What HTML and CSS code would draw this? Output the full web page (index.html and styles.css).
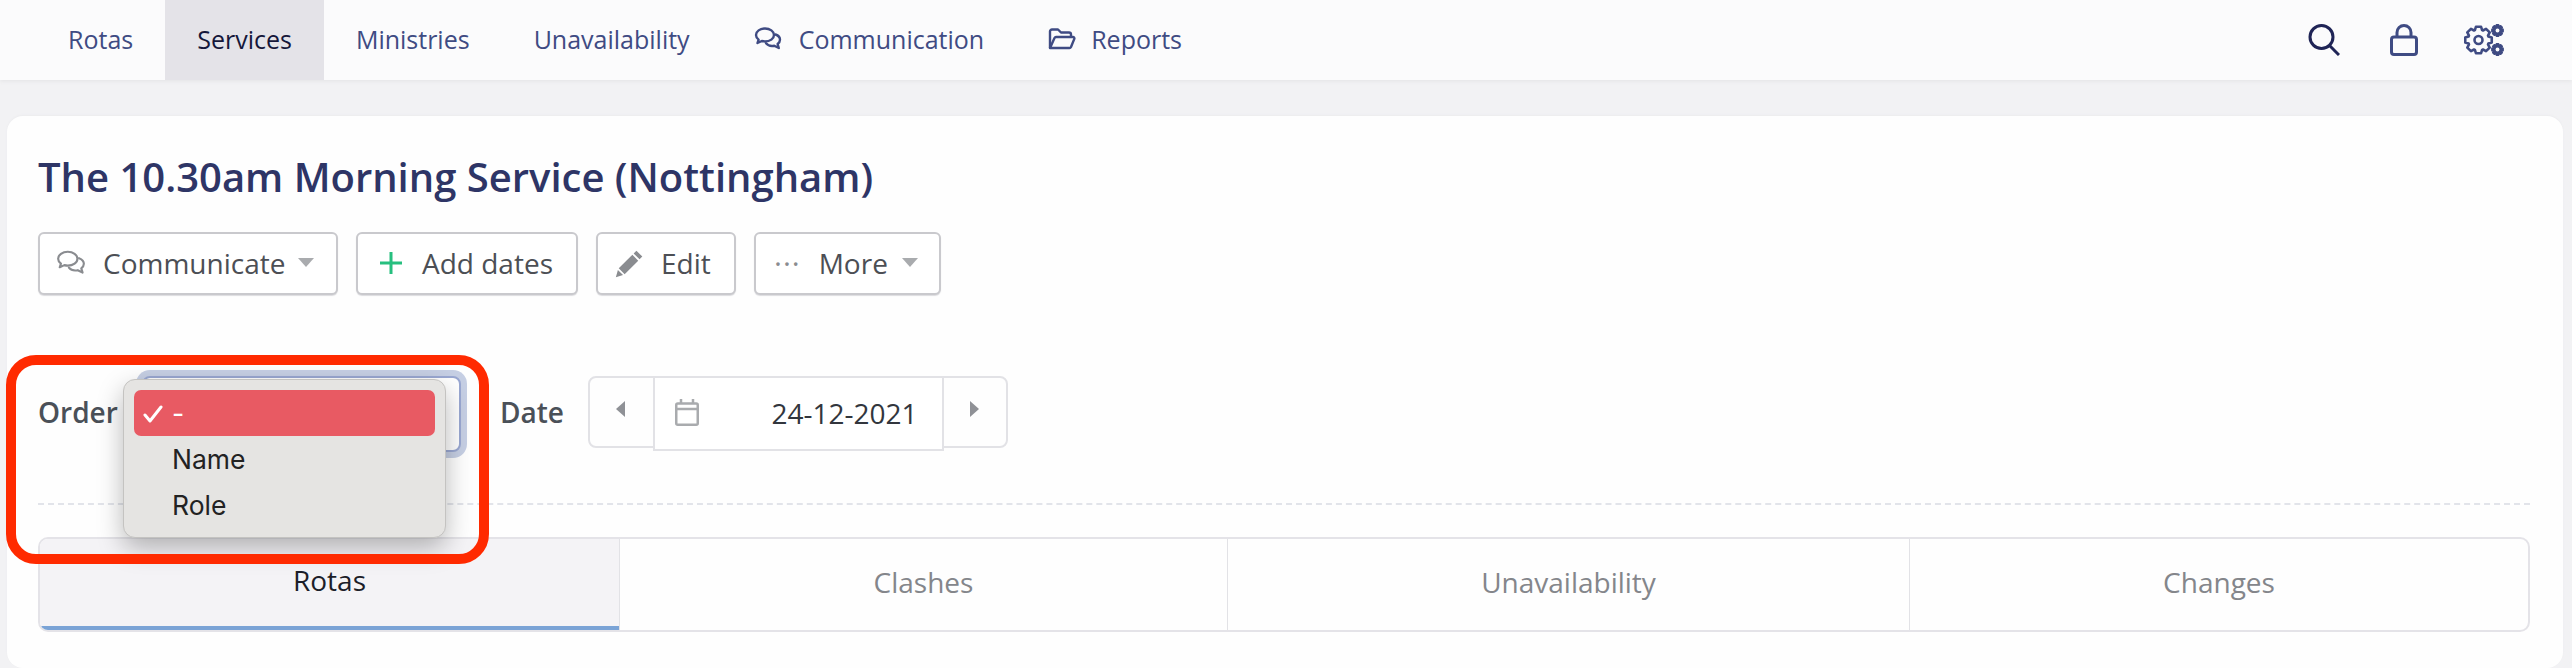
FILE: index.html
```html
<!DOCTYPE html>
<html lang="en">
  <head>
    <meta charset="UTF-8" />
    <title>The 10.30am Morning Service (Nottingham)</title>
    <link rel="stylesheet" href="styles.css">
  </head>
  <body>
    <nav class="topbar">
      <div class="nav-links">
        <a class="nav-link">Rotas</a>
        <a class="nav-link active">Services</a>
        <a class="nav-link">Ministries</a>
        <a class="nav-link">Unavailability</a>
        <a class="nav-link">
          <svg class="nav-icon" viewBox="0 0 28 28" fill="none" stroke="#3f4b83" stroke-width="2.4" stroke-linejoin="round" stroke-linecap="round">
            <path d="M11 3.5c-5 0-9 2.900-9 6.500 0 1.800 1 3.400 2.600 4.600L3.500 18l4.300-2c1 .3 2.100.5 3.200.5 5 0 9-2.900 9-6.500s-4-6.500-9-6.500z" />
            <path d="M21.500 9.500c2.800 1 4.500 3 4.500 5.300 0 1.600-.9 3.100-2.400 4.200l1.200 4-4.500-2.300c-2.900.6-6.500-.2-8.300-2.400" />
          </svg>
          Communication
        </a>
        <a class="nav-link nav-reports">
          <svg class="nav-icon" viewBox="0 0 28 28" fill="none" stroke="#3f4b83" stroke-width="2.4" stroke-linejoin="round">
            <path d="M2 23V6.500C2 5.400 2.900 4.500 4 4.500h6l3 3h8c1.100 0 2 .9 2 2V12" />
            <path d="M2 23l4.500-10c.3-.6.800-1 1.500-1h17c1 0 1.700 1 1.300 1.900L23 22c-.3.600-.8 1-1.500 1z" />
          </svg>
          Reports
        </a>
      </div>
      <div class="nav-tools">
        <svg class="tool-search" viewBox="0 0 32 32" fill="none" stroke="#1f2456" stroke-width="3">
          <circle cx="13.500" cy="13" r="11.500" />
          <path d="M21.500 21.500L31 31" />
        </svg>
        <svg class="tool-lock" viewBox="0 0 28 32" fill="none" stroke="#3f4b83" stroke-width="3" stroke-linejoin="round">
          <rect x="1.500" y="13" width="25" height="17.500" rx="2.500" />
          <path d="M7 13V8.500a7 7 0 0 1 14 0V13" />
        </svg>
        <svg class="tool-gears" viewBox="0 0 40 32" fill="none" stroke="#3f4b83" stroke-linejoin="round">
          <defs>
            <path id="gear" d="M13.250-2.580L13.250 2.580 9.870 3.590 9.520 4.440 11.190 7.550 7.550 11.190 4.440 9.520 3.590 9.870 2.580 13.250-2.580 13.250-3.590 9.870-4.440 9.520-7.550 11.190-11.190 7.550-9.520 4.440-9.870 3.590-13.250 2.580-13.250-2.580-9.870-3.590-9.520-4.440-11.190-7.550-7.550-11.190-4.440-9.520-3.590-9.870-2.580-13.250 2.580-13.250 3.590-9.870 4.440-9.520 7.550-11.190 11.190-7.550 9.520-4.440 9.870-3.590z" />
          </defs>
          <use href="#gear" transform="translate(14.500 16)" stroke-width="2.600" />
          <circle cx="14.500" cy="16" r="4" stroke-width="2.600" />
          <use href="#gear" transform="translate(33.500 6.500) scale(.42)" fill="#3f4b83" stroke-width="4" />
          <circle cx="33.500" cy="6.500" r="1.900" fill="#fbfbfc" stroke="none" />
          <use href="#gear" transform="translate(33.500 25.500) scale(.42)" fill="#3f4b83" stroke-width="4" />
          <circle cx="33.500" cy="25.500" r="1.900" fill="#fbfbfc" stroke="none" />
        </svg>
      </div>
    </nav>

    <main class="card">
      <h1 class="page-title">The 10.30am Morning Service (Nottingham)</h1>

      <div class="actions">
        <button class="btn btn-communicate">
          <svg class="btn-icon" viewBox="0 0 28 28" fill="none" stroke="#8a8c90" stroke-width="2" stroke-linejoin="round" stroke-linecap="round">
            <path d="M11 3.500c-5 0-9 2.900-9 6.500 0 1.800 1 3.400 2.600 4.600L3.500 18l4.300-2c1 .3 2.100.5 3.200.5 5 0 9-2.900 9-6.500s-4-6.500-9-6.500z" />
            <path d="M21.500 9.500c2.800 1 4.500 3 4.500 5.300 0 1.600-.9 3.100-2.400 4.200l1.200 4-4.500-2.300c-2.900.6-6.500-.2-8.300-2.400" />
          </svg>
          Communicate
          <span class="caret"></span>
        </button>
        <button class="btn btn-add">
          <svg class="plus" viewBox="0 0 22 22" stroke="#27bf7f" stroke-width="3">
            <path d="M11 0v22M0 11h22" />
          </svg>
          Add dates
        </button>
        <button class="btn btn-edit">
          <svg class="btn-icon" viewBox="0 0 28 28" fill="#8a8c90">
            <path d="M20 2.500l5.500 5.500-2.600 2.600-5.500-5.500zM16.200 6.300l5.500 5.500L9 24.500l-5.500-5.500zM2.700 20.500l4.800 4.800L.8 27.200z" />
          </svg>
          Edit
        </button>
        <button class="btn btn-more">
          <span class="dots">&middot;&middot;&middot;</span>
          More
          <span class="caret"></span>
        </button>
      </div>

      <div class="filters">
        <label class="filter-label order-label">Order</label>
        <div class="order-select"></div>
        <label class="filter-label date-label">Date</label>
        <div class="date-group">
          <span class="date-arrow left"></span>
          <div class="date-input">
            <svg class="cal-icon" viewBox="0 0 24 27" fill="none" stroke="#a9abae" stroke-width="2.500">
              <rect x="1.250" y="4.500" width="21.500" height="21.250" rx="1.500" />
              <path d="M1 10h22" />
              <path d="M6 0v5M18 0v5" />
            </svg>
            <span class="date-value">24-12-2021</span>
          </div>
          <span class="date-arrow right"></span>
        </div>
      </div>

      <div class="tabs">
        <div class="tab active tab-rotas">Rotas</div>
        <div class="tab tab-clashes">Clashes</div>
        <div class="tab tab-unavail">Unavailability</div>
        <div class="tab tab-changes">Changes</div>
      </div>
    </main>

    <!-- dropdown open over the select, and the annotation round it -->
    <div class="select-menu">
      <div class="menu-item selected">
        <svg class="check" viewBox="0 0 20 18" fill="none" stroke="#fff" stroke-width="3" stroke-linecap="round" stroke-linejoin="round">
          <path d="M2 10l5 6L18 2" />
        </svg>
        -
      </div>
      <div class="menu-item">Name</div>
      <div class="menu-item">Role</div>
    </div>
    <div class="annotation"></div>
  </body>
</html>
```

FILE: styles.css
```css
* {
  box-sizing: border-box;
}
html,
body {
  height: 100%;
}
body {
  margin: 0;
  background-color: #f2f2f4;
  font-family: "Open Sans", sans-serif;
  overflow: hidden;
  position: relative;
}

/* top nav */
.topbar {
  height: 80px;
  background-color: #fbfbfc;
  box-shadow: 0 2px 3px #e8e8ea;
  display: flex;
  justify-content: space-between;
  padding: 0 68px 0 36px;
}
.nav-links {
  display: flex;
}
.nav-link {
  display: flex;
  align-items: center;
  gap: 17px;
  padding: 0 32px 2px 32px;
  font-size: 25px;
  color: #3f4b83;
}
.nav-reports {
  gap: 15px;
}
.nav-link.active {
  background-color: #e4e3e8;
  color: #15173a;
}
.nav-icon {
  width: 28px;
  height: 28px;
}
.nav-tools {
  display: flex;
  align-items: center;
}
.tool-search {
  width: 32px;
  height: 32px;
  margin-right: 50px;
}
.tool-lock {
  width: 28px;
  height: 32px;
  margin-right: 46px;
}
.tool-gears {
  width: 40px;
  height: 32px;
}

/* main card */
.card {
  height: 552px;
  margin: 36px 9px 0 7px;
  padding: 34px 33px 0 31px;
  background-color: #fefefe;
  border-radius: 16px;
  box-shadow: 0 -1px 2px #ececee;
}
.page-title {
  margin: 0;
  font-size: 40px;
  line-height: 54px;
  font-weight: 600;
  color: #2e3566;
}
.actions {
  display: flex;
  gap: 18px;
  margin-top: 28px;
}
.btn {
  height: 63px;
  display: flex;
  align-items: center;
  padding: 0 0 2px 0;
  background-color: #fff;
  border: 2px solid #c9c9cd;
  border-radius: 6px;
  font-family: "Open Sans", sans-serif;
  font-size: 28px;
  color: #4c4f55;
  box-shadow: 0 1px 1px #dcdcdf;
}
.btn-communicate {
  width: 300px;
  padding-left: 16px;
  gap: 17px;
}
.btn-add {
  width: 222px;
  padding-left: 22px;
  gap: 20px;
}
.btn-edit {
  width: 140px;
  padding-left: 17px;
  gap: 16px;
}
.btn-more {
  width: 187px;
  padding-left: 18px;
  gap: 18px;
}
.btn-icon {
  width: 30px;
  height: 30px;
}
.plus {
  width: 22px;
  height: 22px;
}
.dots {
  font-size: 30px;
  line-height: 1;
  letter-spacing: 1px;
  color: #8a8c90;
}
.caret {
  width: 0;
  height: 0;
  margin-left: -4px;
  border-left: 8px solid transparent;
  border-right: 8px solid transparent;
  border-top: 9px solid #a9abae;
}

/* order + date row */
.filters {
  display: flex;
  align-items: flex-start;
  height: 129px;
  margin-top: 81px;
  border-bottom: 2px dashed #e2e4ea;
}
.filter-label {
  font-size: 28px;
  font-weight: 600;
  color: #4a5058;
  line-height: 72px;
}
.order-label {
  width: 104px;
}
.order-select {
  width: 319px;
  height: 76px;
  background-color: #fff;
  border: 2px solid #9aa8d2;
  border-radius: 8px;
  box-shadow: 0 0 0 6px #c6cfe4;
}
.date-label {
  width: 88px;
  margin-left: 39px;
}
.date-group {
  display: flex;
  align-items: flex-start;
  width: 420px;
  height: 72px;
  border: 2px solid #e2e2e6;
  border-radius: 8px;
}
.date-arrow {
  flex: 1;
  height: 68px;
  position: relative;
}
.date-arrow::after {
  content: "";
  position: absolute;
  top: 23px;
  width: 0;
  height: 0;
  border-top: 8px solid transparent;
  border-bottom: 8px solid transparent;
}
.date-arrow.left::after {
  left: 26px;
  border-right: 9px solid #8f9196;
}
.date-arrow.right::after {
  right: 27px;
  border-left: 9px solid #8f9196;
}
.date-input {
  width: 291px;
  height: 74px;
  margin-top: -1px;
  padding: 0 24px 2px 20px;
  display: flex;
  align-items: center;
  justify-content: space-between;
  background-color: #fff;
  border: 2px solid #e2e2e6;
  border-top-width: 1px;
}
.cal-icon {
  width: 24px;
  height: 27px;
}
.date-value {
  font-size: 28px;
  color: #32363d;
}

/* tabs */
.tabs {
  display: flex;
  height: 95px;
  margin-top: 32px;
  border: 2px solid #e4e3e8;
  border-radius: 10px;
  overflow: hidden;
}
.tab {
  display: flex;
  align-items: center;
  justify-content: center;
  padding-bottom: 6px;
  font-size: 28px;
  color: #84868b;
  border-left: 1px solid #e2e2e6;
}
.tab.active {
  background-color: #f4f3f6;
  border-left: none;
  border-bottom: 4px solid #7aa3d6;
  color: #1c1e29;
}
.tab-rotas {
  width: 579px;
}
.tab-clashes {
  width: 608px;
}
.tab-unavail {
  width: 682px;
}
.tab-changes {
  flex: 1;
}

/* open select popup */
.select-menu {
  position: absolute;
  left: 123px;
  top: 379px;
  width: 323px;
  height: 159px;
  padding: 10px 10px;
  background-color: #e5e4e2;
  border: 1px solid #c4c3c1;
  border-radius: 12px;
  box-shadow: 0 10px 26px rgba(0, 0, 0, 0.28);
  font-family: Inter, sans-serif;
  font-size: 26.5px;
  color: #222;
}
.menu-item {
  position: relative;
  height: 46px;
  padding-left: 38px;
  line-height: 46px;
}
.menu-item.selected {
  background-color: #e85a63;
  border-radius: 7px;
  color: #fff;
}
.check {
  position: absolute;
  left: 9px;
  top: 15px;
  width: 20px;
  height: 18px;
}
.annotation {
  position: absolute;
  left: 6px;
  top: 355px;
  width: 483px;
  height: 209px;
  border: 10px solid #ff2a00;
  border-radius: 30px;
}
```
